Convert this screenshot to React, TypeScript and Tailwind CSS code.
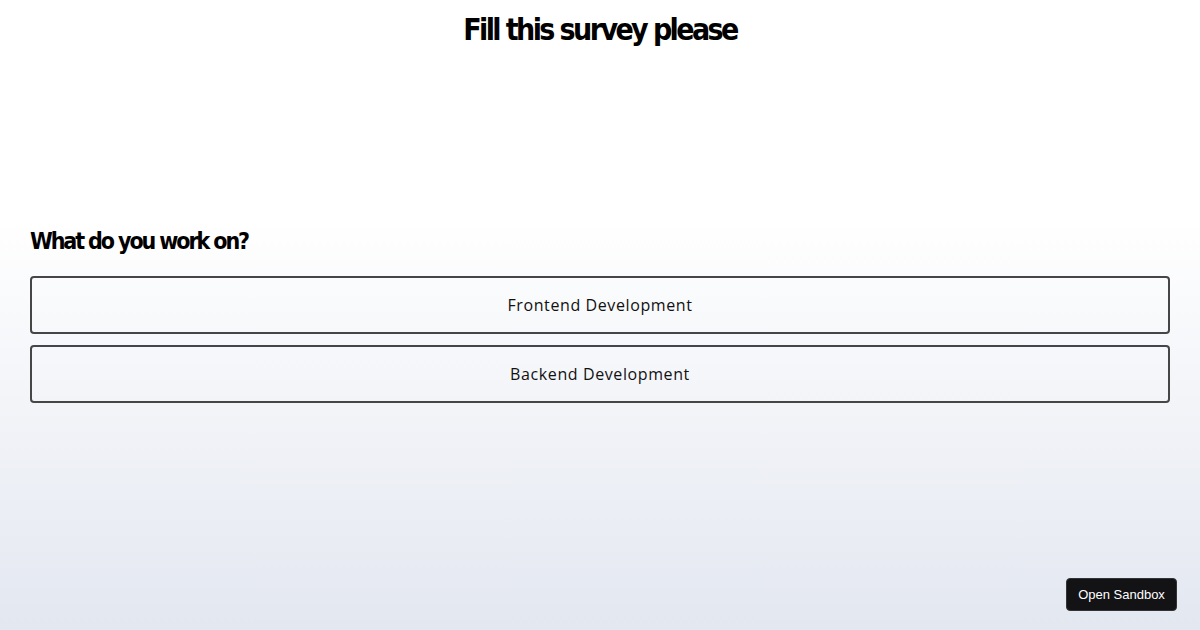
import React from "react";

export default function App() {
  const heading = { fontFamily: '"DejaVu Sans Condensed", "DejaVu Sans", sans-serif', fontStretch: "condensed" as const };
  const body = { fontFamily: '"Open Sans", "Noto Sans", sans-serif' };
  return (
    <div className="relative flex h-[630px] w-[1200px] flex-col overflow-hidden bg-white">
      <header className="h-[220px] bg-white pt-[9px]">
        <h1 className="text-center text-[30px] font-bold leading-[42px] tracking-[-2.6px] text-black" style={heading}>
          Fill this survey please
        </h1>
      </header>
      <main className="flex flex-1 flex-col bg-gradient-to-b from-white to-[#e3e7f0] px-[30px] pt-[5px]">
        <h2 className="text-[23px] font-bold leading-[32px] tracking-[-2.1px] text-black" style={heading}>
          What do you work on?
        </h2>
        <div className="mt-[19px] flex flex-col gap-[11px]">
          {["Frontend Development", "Backend Development"].map((t) => (
            <button
              key={t}
              className="flex h-[58px] w-full items-center justify-center rounded-[4px] border-2 border-[#464646] bg-transparent text-[16px] text-[#111] tracking-[0.6px]"
              style={body}
            >
              {t}
            </button>
          ))}
        </div>
      </main>
      <button
        className="absolute bottom-[19px] right-[23px] flex h-[33px] w-[111px] items-center justify-center rounded-[4px] border border-[#333] bg-[#131316] text-[13px] text-white"
        style={{ fontFamily: '"Liberation Sans", Arial, sans-serif' }}
      >
        Open Sandbox
      </button>
    </div>
  );
}
